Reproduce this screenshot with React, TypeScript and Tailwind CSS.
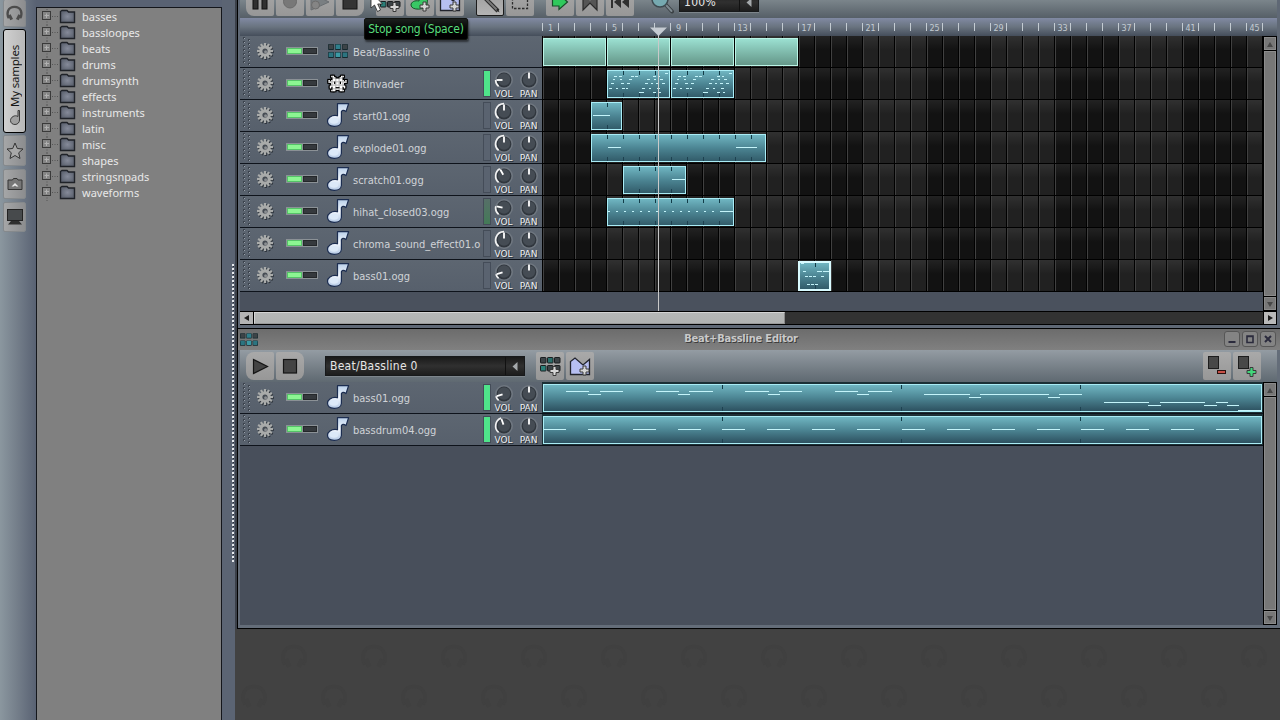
import React from 'react';
import { clsx } from 'clsx';

type Note = [x: number, y: number, w: number];

interface Clip {
  start: number;
  bars: number;
  kind?: 'beat' | 'pattern';
  selected?: boolean;
  notes?: Note[];
}

interface Track {
  name: string;
  icon: 'beat' | 'invader' | 'note';
  vol?: number;
  level?: 'full' | 'low' | 'off';
  clips: Clip[];
}

const ARP: Note[] = [
  [7, 6, 3], [12, 6, 3], [24, 6, 3], [28, 6, 3], [46, 6, 3], [58, 3, 3], [51, 6, 2],
  [6, 9, 2], [13, 9, 2], [22, 9, 3], [40, 9, 3], [47, 9, 2], [53, 9, 3],
  [4, 13, 3], [14, 13, 3], [20, 13, 3], [38, 13, 3], [44, 13, 2], [49, 13, 3], [55, 13, 3],
  [2, 18, 3], [9, 18, 2], [15, 18, 3], [19, 18, 2], [35, 18, 3], [42, 18, 2], [50, 18, 3],
  [32, 22, 5], [46, 22, 3], [52, 22, 2],
];

const HIHAT: Note[] = [
  ...Array.from({ length: 14 }, (_, i): Note => [i * 8 + 1, 13, 2]),
  [113, 13, 13],
];

const SONG: Track[] = [
  {
    name: 'Beat/Bassline 0',
    icon: 'beat',
    clips: [0, 4, 8, 12].map((start) => ({ start, bars: 4, kind: 'beat' })),
  },
  {
    name: 'BitInvader', icon: 'invader', vol: -90, level: 'full',
    clips: [{ start: 4, bars: 4, notes: ARP }, { start: 8, bars: 4, notes: ARP }],
  },
  { name: 'start01.ogg', icon: 'note', vol: 0, clips: [{ start: 3, bars: 2, notes: [[2, 13, 17]] }] },
  {
    name: 'explode01.ogg', icon: 'note', vol: 0,
    clips: [{ start: 3, bars: 11, notes: [[17, 13, 13], [145, 13, 21]] }],
  },
  { name: 'scratch01.ogg', icon: 'note', vol: -30, clips: [{ start: 5, bars: 4, notes: [[49, 13, 13]] }] },
  { name: 'hihat_closed03.ogg', icon: 'note', vol: -78, level: 'low', clips: [{ start: 4, bars: 8, notes: HIHAT }] },
  { name: 'chroma_sound_effect01.o', icon: 'note', vol: 0, clips: [] },
  {
    name: 'bass01.ogg', icon: 'note', vol: -106,
    clips: [{
      start: 16, bars: 2, selected: true,
      notes: [
        [2, 1, 3], [4, 9, 3], [18, 9, 5], [24, 9, 6], [6, 14, 3], [10, 14, 3], [14, 14, 3],
        [22, 14, 3], [8, 22, 3], [12, 22, 3], [16, 22, 3],
      ],
    }],
  },
];

const BASS: Note[] = [
  [23, 7, 23], [45, 10, 13], [57, 7, 23],
  [113, 7, 23], [135, 10, 12], [146, 7, 24],
  [202, 7, 24], [225, 10, 12], [236, 7, 23],
  [292, 7, 23], [314, 10, 12], [325, 7, 24],
  [381, 10, 46], [426, 13, 12], [437, 10, 69], [505, 13, 12], [516, 10, 23],
  [561, 18, 45], [605, 21, 13], [617, 18, 45], [661, 21, 13], [673, 18, 12], [684, 21, 12], [695, 26, 23],
];

const KICK: Note[] = Array.from({ length: 16 }, (_, i): Note => [Math.round(i * 44.87), 13, 23]);

const BEAT_TRACKS = [
  { track: { name: 'bass01.ogg', icon: 'note', vol: -106, level: 'full', clips: [] } as Track, notes: BASS },
  { track: { name: 'bassdrum04.ogg', icon: 'note', vol: -20, level: 'full', clips: [] } as Track, notes: KICK },
];

const FOLDERS = [
  'basses', 'bassloopes', 'beats', 'drums', 'drumsynth', 'effects',
  'instruments', 'latin', 'misc', 'shapes', 'stringsnpads', 'waveforms',
];

const UI_FONT = "font-['DejaVu_Sans_Condensed','DejaVu_Sans',sans-serif]";

/* ---------- icons ---------- */

function BeatIcon({ className }: { className?: string }) {
  const cells = ['#3c4347', '#2f7f8c', '#3c4347', '#2c7480', '#3c9aa5', '#2c7480'];
  return (
    <svg viewBox="0 0 20 14" className={clsx('shrink-0', className)}>
      {cells.map((fill, i) => (
        <g key={i} transform={`translate(${(i % 3) * 7} ${Math.floor(i / 3) * 8})`}>
          <rect width="6" height="6" rx="1" fill="#14282e" />
          <rect x="0.6" y="0.4" width="4.8" height="4.6" rx="0.6" fill={fill} />
        </g>
      ))}
    </svg>
  );
}

function NoteIcon() {
  return (
    <svg viewBox="0 0 24 26" className="h-[26px] w-6 shrink-0">
      <defs>
        <linearGradient id="note" x1="0" y1="0" x2="0" y2="1">
          <stop offset="0" stopColor="#b9cfe9" />
          <stop offset="0.5" stopColor="#f4f9ff" />
          <stop offset="1" stopColor="#b4c8e4" />
        </linearGradient>
      </defs>
      <path
        d="M11.5 1.7H22.6L20 9.6Q17 7.2 15.4 9.5V19.5C15 23 11.5 24.6 8 24.4C4 24.2 1.4 22 1.5 19C1.6 15.6 5.5 13.4 9 13.4C10 13.4 11 13.5 11.5 13.8Z"
        fill="url(#note)"
        stroke="#1c2d50"
        strokeWidth="1.2"
        strokeLinejoin="round"
      />
      <ellipse cx="8" cy="18.7" rx="4.3" ry="3" fill="#dce9f8" />
    </svg>
  );
}

const SPRITE = [
  '..##.....##..',
  '...##...##...',
  '...#######...',
  '#.#########.#',
  '####.###.####',
  '..##.###.##..',
  '..#########..',
  '.###########.',
  '.#.##...##.#.',
  '...#######...',
  '..###...###..',
];

function InvaderIcon() {
  const cells = SPRITE.flatMap((row, y) => [...row].map((c, x) => ({ c, x, y }))).filter((p) => p.c === '#');
  return (
    <svg viewBox="-1 -1 15 13" className="h-[19px] w-[21px] shrink-0">
      <rect x="2.5" y="2" width="8" height="7.5" fill="#000" />
      {cells.map((p) => (
        <rect key={`o${p.x}-${p.y}`} x={p.x - 0.8} y={p.y - 0.8} width="2.6" height="2.6" fill="#000" />
      ))}
      {cells.map((p) => (
        <rect key={`${p.x}-${p.y}`} x={p.x} y={p.y} width="1.05" height="1.05" fill="#fff" />
      ))}
    </svg>
  );
}

function GearIcon() {
  return (
    <svg viewBox="-9 -9 18 18" className="size-[18px] shrink-0">
      <g fill="#2f353d" transform="translate(0.8 1)">
        {Array.from({ length: 12 }, (_, i) => (
          <rect key={i} x="-1.1" y="-8" width="2.2" height="4" transform={`rotate(${i * 30})`} />
        ))}
        <circle r="5.8" />
      </g>
      <g fill="#a9abaa">
        {Array.from({ length: 12 }, (_, i) => (
          <rect key={i} x="-1.1" y="-8" width="2.2" height="4" transform={`rotate(${i * 30})`} />
        ))}
        <circle r="5.8" />
      </g>
      <circle r="2.6" fill="#454b53" />
      <circle cx="0.6" cy="0.7" r="1.5" fill="#8a8e91" />
    </svg>
  );
}

function GripIcon() {
  return (
    <svg viewBox="0 0 9 28" className="h-7 w-[9px] shrink-0">
      {Array.from({ length: 7 }, (_, i) => (
        <g key={i}>
          <rect x={1} y={i * 4} width="2" height="2" fill="#3c434d" />
          <rect x={2} y={i * 4 + 1} width="1" height="1" fill="#98a0aa" />
          <rect x={6} y={i * 4 + 2} width="2" height="2" fill="#3c434d" />
          <rect x={7} y={i * 4 + 3} width="1" height="1" fill="#98a0aa" />
        </g>
      ))}
    </svg>
  );
}

function HeadphonesIcon({ className, color }: { className?: string; color: string }) {
  return (
    <svg viewBox="0 0 20 20" className={clsx('shrink-0', className)} fill="none">
      <path d="M4 15C1 10 3 3 10 3S19 10 16 15" stroke={color} strokeWidth="2.4" />
      <path d="M4.5 11.5l2.5 5M15.5 11.5l-2.5 5" stroke={color} strokeWidth="3.2" />
    </svg>
  );
}

function PlusBadge({ x, y, fill = '#d6d6d6' }: { x: number; y: number; fill?: string }) {
  return (
    <path
      d={`M${x - 1.5} ${y - 4.5}h3v3h3v3h-3v3h-3v-3h-3v-3h3z`}
      fill={fill}
      stroke="#3a3a3a"
      strokeWidth="1"
    />
  );
}

function AddBeatIcon() {
  const cells = ['#3c4347', '#2b6f6c', '#3c4347', '#2b7f78', '#3c4347', '#3c4347'];
  return (
    <svg viewBox="0 0 28 28" className="size-7">
      {cells.map((fill, i) => (
        <rect
          key={i}
          x={4.5 + (i % 3) * 7}
          y={5.5 + Math.floor(i / 3) * 8}
          width="5.5"
          height="5.5"
          rx="0.6"
          fill={fill}
          stroke="#1b1e20"
        />
      ))}
      <PlusBadge x={18.5} y={19} />
    </svg>
  );
}

function AddAutomationIcon() {
  return (
    <svg viewBox="0 0 28 28" className="size-7">
      <path d="M4.5 22.5V9.5L9 6L17 13L23.5 7.5V22.5Z" fill="#b7bff2" stroke="#22242c" strokeWidth="1.3" />
      <PlusBadge x={18.5} y={18.5} />
    </svg>
  );
}

/* ---------- small controls ---------- */

function ToolButton({ children, active, className }: { children?: React.ReactNode; active?: boolean; className?: string }) {
  return (
    <div
      className={clsx(
        'flex size-7 shrink-0 items-center justify-center overflow-hidden rounded-[2px]',
        active
          ? 'border border-[#1c1c1c] bg-linear-to-b from-[#9b9b9b] to-[#b4b4b4]'
          : 'bg-linear-to-b from-[#a9a9a9] to-[#979797]',
        className,
      )}
    >
      {children}
    </div>
  );
}

function Combo({ value, className }: { value: string; className?: string }) {
  return (
    <div
      className={clsx(
        'flex shrink-0 items-center justify-between border border-[#17191b] bg-linear-to-b from-[#1a1a1a] via-[#303030] to-[#1d1d1d] text-[12px] leading-none tracking-[0.27px] text-[#e6e6e6] shadow-[0_1px_0_#7d858b]',
        className,
      )}
    >
      <span className="whitespace-nowrap pl-1">{value}</span>
      <span className="flex h-full w-[19px] items-center justify-center border-l border-[#111]">
        <svg viewBox="0 0 6 9" className="h-[9px] w-1.5">
          <path d="M5.5 0V9L0.5 4.5Z" fill="#a5a9ac" />
        </svg>
      </span>
    </div>
  );
}

function Knob({ label, angle, arc }: { label: string; angle: number; arc?: boolean }) {
  const rad = ((angle - 90) * Math.PI) / 180;
  const from = ((-140 - 90) * Math.PI) / 180;
  const px = Math.cos(rad);
  const py = Math.sin(rad);
  return (
    <div className="flex w-[25px] flex-col items-center">
      <svg viewBox="-10 -10 20 20" className="size-5 shrink-0">
        <circle r="9" fill="#6f7780" />
        <circle r="7.4" fill="#30363d" />
        <circle r="6.2" cy="-0.5" fill="#454c54" />
        {arc && (
          <path
            d={`M${8.4 * Math.cos(from)} ${8.4 * Math.sin(from)}A8.4 8.4 0 0 1 ${8.4 * px} ${8.4 * py}`}
            fill="none"
            stroke="#f2f2f2"
            strokeWidth="1.6"
          />
        )}
        <path d={`M${px * 1.5} ${py * 1.5}L${px * 7.5} ${py * 7.5}`} stroke="#fff" strokeWidth="1.8" />
      </svg>
      <span className="-mt-px font-['DejaVu_Sans',sans-serif] text-[9px] leading-[10px] text-[#eef0f2] [text-shadow:1px_1px_0_#2a2f36]">
        {label}
      </span>
    </div>
  );
}

function Leds() {
  return (
    <div className="flex h-[8px] w-8 shrink-0 border border-[#8b9196] bg-[#8b9196]">
      <div className="h-full w-[15px] border border-[#55c268] bg-[#8cf592]" />
      <div className="ml-px h-full flex-1 border border-[#24272a] bg-[#35393d]" />
    </div>
  );
}

/* ---------- tracks ---------- */

function TrackHeader({ track }: { track: Track }) {
  const hasMixer = track.vol !== undefined;
  return (
    <div className="flex h-8 w-[302px] shrink-0 items-center border-b border-[#0e131b] bg-linear-to-b from-[#5d6671] to-[#57606c] pb-px">
      <div className="flex w-4 pl-0.5">
        <GripIcon />
      </div>
      <div className="flex w-[30px]">
        <GearIcon />
      </div>
      <Leds />
      <div className="flex h-full w-[35px] shrink-0 items-center justify-center pl-1">
        {track.icon === 'beat' && <BeatIcon className="h-3.5 w-5" />}
        {track.icon === 'invader' && <InvaderIcon />}
        {track.icon === 'note' && <NoteIcon />}
      </div>
      <div className="w-[129px] shrink-0 pt-[3px] text-[11px] leading-[15px] whitespace-nowrap text-[#d0d3d7]">
        {track.name}
      </div>
      {hasMixer && (
        <>
          <div
            className={clsx('ml-px h-[27px] w-2 shrink-0 border border-[#444c58]', {
              'border-[#3fa566] bg-[#4fe48a]': track.level === 'full',
              'bg-linear-to-b from-[#566f68] to-[#437a57]': track.level === 'low',
              'bg-[#5a6370]': !track.level,
            })}
          />
          <div className="flex pt-0.5">
            <Knob label="VOL" angle={track.vol ?? 0} arc />
            <Knob label="PAN" angle={0} />
          </div>
        </>
      )}
    </div>
  );
}

function ClipFace({ notes = [], ticks }: { notes?: Note[]; ticks: number[] }) {
  return (
    <svg className="block size-full overflow-hidden" shapeRendering="crispEdges">
      {ticks.map((x) => (
        <g key={x}>
          <rect x={x - 1} y="0" width="1" height="4" fill="#123c48" />
          <rect x={x - 1} y="22" width="1" height="4" fill="#1e4150" />
        </g>
      ))}
      {notes.map(([x, y, w], i) => (
        <rect key={i} x={x - 1} y={y - 1} width={w} height="1" fill="#c4f4fa" />
      ))}
    </svg>
  );
}

function ClipBox({ clip }: { clip: Clip }) {
  const ticks = clip.kind === 'beat' ? [] : Array.from({ length: clip.bars - 1 }, (_, i) => (i + 1) * 16);
  return (
    <div
      className={clsx('absolute', {
        'top-0.5 h-7 border': !clip.selected,
        'top-px -ml-px h-[30px] border-2 border-[#d9fbff]': clip.selected,
        'border-[#baf3e5] bg-linear-to-b from-[#9be0d1] to-[#659789]': clip.kind === 'beat',
        'bg-linear-to-b from-[#70b6c2] via-[#4c8593] to-[#325c6a]': clip.kind !== 'beat',
        'border-[#a9ecf5]': clip.kind !== 'beat' && !clip.selected,
      })}
      style={{ left: clip.start * 16 + 1, width: clip.bars * 16 + (clip.selected ? 1 : -1) }}
    >
      <ClipFace notes={clip.notes} ticks={ticks} />
    </div>
  );
}

function SongLane({ clips }: { clips: Clip[] }) {
  return (
    <div className="relative h-8 w-[721px] border-b border-black bg-[repeating-linear-gradient(90deg,#000_0_1px,#404040_1px_2px,transparent_2px_16px),linear-gradient(180deg,rgba(255,255,255,0.07),rgba(255,255,255,0)_45%),repeating-linear-gradient(90deg,#121212_0_64px,#212121_64px_128px)]">
      {clips.map((clip) => (
        <ClipBox key={clip.start} clip={clip} />
      ))}
    </div>
  );
}

function Timeline() {
  return (
    <div className="flex h-[18px] shrink-0 bg-linear-to-b from-[#818aa3] via-[#69737f] to-[#454e5b] pl-[302px]">
      <div className="flex h-full w-[735px] items-center overflow-hidden">
        {Array.from({ length: 46 }, (_, i) => (
          <div
            key={i}
            className="flex h-2 w-4 shrink-0 items-center justify-center border-l border-[#c4ccd3] pt-1 font-['DejaVu_Sans',sans-serif] text-[8px] leading-none text-[#c3cbd2]"
          >
            {i % 4 === 0 && i < 45 ? i + 1 : ''}
          </div>
        ))}
      </div>
    </div>
  );
}

function Arrow({ dir, dim }: { dir: 'up' | 'down' | 'left' | 'right'; dim?: boolean }) {
  const paths = { up: 'M0 6L3 1L6 6Z', down: 'M0 1L3 6L6 1Z', left: 'M5 0V6L0 3Z', right: 'M1 0V6L6 3Z' };
  return (
    <svg viewBox="0 0 6 6" className="size-1.5">
      <path d={paths[dir]} fill={dim ? '#474747' : '#1d1d1d'} />
    </svg>
  );
}

function VScroll() {
  return (
    <div className="flex w-[14px] shrink-0 flex-col border border-black bg-black">
      <div className="flex h-[13px] items-center justify-center border border-[#8a8a8a] bg-[#777]">
        <Arrow dir="up" dim />
      </div>
      <div className="my-px flex-1 border border-[#8c8c8c] bg-[#777]" />
      <div className="flex h-[13px] items-center justify-center border border-[#8a8a8a] bg-[#777]">
        <Arrow dir="down" dim />
      </div>
    </div>
  );
}

function HScroll() {
  return (
    <div className="flex h-3.5 shrink-0 border-y border-black bg-[#323232]">
      <div className="flex w-[13px] items-center justify-center bg-[#b4b4b4]">
        <Arrow dir="left" />
      </div>
      <div className="w-px bg-black" />
      <div className="w-[531px] border border-[#d3d3d3] border-r-[#888] border-b-[#999] bg-linear-to-b from-[#b5b7b6] to-[#b0b2b1]" />
      <div className="ml-auto flex w-[14px] items-center justify-center border-x border-black bg-[#b9b9b9]">
        <Arrow dir="right" />
      </div>
    </div>
  );
}

/* ---------- windows ---------- */

function SongToolbar() {
  return (
    <div className="flex h-[18px] shrink-0 items-start overflow-hidden bg-linear-to-b from-[#7b858b] to-[#565f67] pl-1.5">
      <div className="-mt-3 flex items-start">
        <ToolButton className="rounded-bl-lg">
          <svg viewBox="0 0 28 28" className="size-7">
            <rect x="7" y="6" width="5" height="15" fill="#303030" stroke="#111" />
            <rect x="16" y="6" width="5" height="15" fill="#303030" stroke="#111" />
          </svg>
        </ToolButton>
        <ToolButton className="ml-0.5">
          <svg viewBox="0 0 28 28" className="size-7">
            <circle cx="14" cy="13.5" r="6.5" fill="#787878" stroke="#6a6a6a" />
          </svg>
        </ToolButton>
        <ToolButton className="ml-0.5">
          <svg viewBox="0 0 28 28" className="size-7">
            <path d="M5 5L23 14L12 19L5 22Z" fill="#7a7f82" stroke="#6a6e72" />
            <circle cx="9.5" cy="17" r="4" fill="#858585" stroke="#6c6c6c" />
          </svg>
        </ToolButton>
        <ToolButton className="ml-0.5 rounded-br-lg">
          <svg viewBox="0 0 28 28" className="size-7">
            <rect x="7" y="7" width="14" height="14" fill="#343434" stroke="#151515" />
          </svg>
        </ToolButton>
        <ToolButton className="ml-3">
          <AddBeatIcon />
        </ToolButton>
        <ToolButton className="ml-0.5">
          <svg viewBox="0 0 28 28" className="size-7">
            <path d="M5 17c0-3 4-5 8-4l1-8h8l-1 12c-1 5-16 6-16 0z" fill="#39c765" stroke="#15552a" />
            <PlusBadge x={18.5} y={18.5} />
          </svg>
        </ToolButton>
        <ToolButton className="ml-0.5">
          <AddAutomationIcon />
        </ToolButton>
        <ToolButton active className="ml-3">
          <svg viewBox="0 0 28 28" className="size-7 shrink-0">
            <path d="M6 7L22 23" stroke="#2a2a2a" strokeWidth="4" />
            <path d="M6 7L22 23" stroke="#7a7a7a" strokeWidth="2" />
            <path d="M20 22l3.5 2.5L22 20.5z" fill="#222" />
          </svg>
        </ToolButton>
        <ToolButton className="ml-0.5">
          <svg viewBox="0 0 28 28" className="size-7">
            <rect x="6.5" y="6.5" width="15" height="14" fill="none" stroke="#2c2c2c" strokeWidth="1.3" strokeDasharray="2.5 1.5" />
          </svg>
        </ToolButton>
        <ToolButton className="ml-3">
          <svg viewBox="0 0 28 28" className="size-7">
            <path d="M6.5 10.5H13V6L21.5 14L13 21.5V18H6.5Z" fill="#2fc95c" stroke="#174d28" strokeWidth="1.2" />
          </svg>
        </ToolButton>
        <ToolButton className="ml-0.5">
          <svg viewBox="0 0 28 28" className="size-7">
            <path d="M7 6H21V22L14 15L7 22Z" fill="#555" stroke="#2a2a2a" strokeWidth="1.2" />
            <path d="M10 6H18L14 13Z" fill="#989898" />
          </svg>
        </ToolButton>
        <ToolButton className="ml-0.5">
          <svg viewBox="0 0 28 28" className="size-7" fill="#2f2f2f">
            <path d="M5 7H7V20H5ZM15 8V20L8 14ZM23 8V20L16 14Z" />
          </svg>
        </ToolButton>
      </div>
      <svg viewBox="0 0 26 14" className="ml-4 h-3.5 w-[26px] shrink-0">
        <path d="M16 5L22 11.5" stroke="#3a4044" strokeWidth="4" strokeLinecap="round" />
        <path d="M16 5L21.5 11" stroke="#7d8990" strokeWidth="2" strokeLinecap="round" />
        <circle cx="10" cy="-1" r="8" fill="#76a9b0" stroke="#3d4a50" strokeWidth="1.5" />
      </svg>
      <Combo value="100%" className="-mt-2 ml-[3px] h-5 w-20" />
    </div>
  );
}

function SongEditor() {
  return (
    <section className="relative ml-0.5 flex h-[328px] flex-col border-l border-black bg-[#5f6875] pl-0.5">
      <div className="flex w-[1037px] flex-col">
        <SongToolbar />
        <Timeline />
        <div className="flex h-[275px] bg-[#4a515d]">
          <div className="flex flex-col">
            {SONG.map((track) => (
              <div key={track.name} className="flex">
                <TrackHeader track={track} />
                <SongLane clips={track.clips} />
              </div>
            ))}
          </div>
          <VScroll />
        </div>
        <HScroll />
      </div>

      {/* playhead */}
      <svg viewBox="0 0 17 284" className="absolute top-[27px] left-[412px] h-[284px] w-[17px]">
        <path d="M8.5 8V284" stroke="#c9c9c9" strokeWidth="1" />
        <path d="M0 0.5H17L8.5 9Z" fill="#c5cbd2" />
      </svg>

      {/* tooltip and pointer */}
      <div className="absolute top-[18px] left-[126px] flex h-[22px] w-[104px] items-center justify-center whitespace-nowrap rounded-[2px] border border-[#10130f] bg-linear-to-b from-[#1c201e] to-black text-[12px] leading-none tracking-[-0.18px] text-[#58dd7c] shadow-[1px_2px_2px_rgba(0,0,0,0.5)]">
        Stop song (Space)
      </div>
      <svg viewBox="0 0 14 20" className="absolute -top-2 left-[132px] h-5 w-3.5">
        <path d="M1 0V16L4.5 13L7.5 19.5L10.5 18L7.7 12H12.5Z" fill="#fff" stroke="#222" strokeWidth="0.8" />
      </svg>
    </section>
  );
}

function WindowButton({ children }: { children: React.ReactNode }) {
  return (
    <div className="flex size-4 items-center justify-center rounded-[3px] border border-[#565656] bg-[#848484]">
      <svg viewBox="0 0 10 10" className="size-2.5" fill="none" stroke="#2b2b3d" strokeWidth="1.6">
        {children}
      </svg>
    </div>
  );
}

function BeatEditor() {
  return (
    <section className="ml-0.5 flex h-[301px] flex-col border-y border-l border-black bg-[#646d79]">
      <div className="flex h-[21px] shrink-0 items-center bg-linear-to-b from-[#6c6c6c] to-[#808080] pr-1 pb-px pl-0.5">
        <BeatIcon className="h-[13px] w-[18px]" />
        <h2 className="flex-1 pb-px text-center text-[11px] leading-none font-bold tracking-[-0.2px] text-[#c9c9c9] [text-shadow:1px_1px_0_#3d3d3d]">
          Beat+Bassline Editor
        </h2>
        <div className="flex gap-0.5">
          <WindowButton><path d="M1.5 8H8.5" strokeWidth="2" /></WindowButton>
          <WindowButton><path d="M2 2H8V8.5H2ZM2 2.5H8" /></WindowButton>
          <WindowButton><path d="M2 2L8 8M8 2L2 8" strokeWidth="2" /></WindowButton>
        </div>
      </div>
      <div className="ml-0.5 flex h-[275px] w-[1037px] flex-col bg-[#484f5b]">
        <div className="flex h-8 shrink-0 items-center bg-linear-to-b from-[#949ca3] to-[#5f6971] pr-4 pl-1.5">
          <ToolButton className="rounded-l-lg">
            <svg viewBox="0 0 28 28" className="size-7">
              <path d="M7.5 7.5L21.5 14.5L7.5 21.5Z" fill="#444" stroke="#151515" strokeWidth="1.2" />
            </svg>
          </ToolButton>
          <ToolButton className="ml-0.5 rounded-r-lg">
            <svg viewBox="0 0 28 28" className="size-7">
              <rect x="7.5" y="7.5" width="13" height="13.5" fill="#444" stroke="#151515" strokeWidth="1.2" />
            </svg>
          </ToolButton>
          <Combo value="Beat/Bassline 0" className="ml-[21px] h-5 w-[200px]" />
          <ToolButton className="ml-[11px]">
            <AddBeatIcon />
          </ToolButton>
          <ToolButton className="ml-0.5">
            <AddAutomationIcon />
          </ToolButton>
          <ToolButton className="ml-auto">
            <svg viewBox="0 0 28 28" className="size-7">
              <rect x="5.5" y="4.5" width="10" height="12" fill="#484848" stroke="#1d1d1d" />
              <rect x="14.5" y="18.5" width="8" height="3" fill="#c95046" stroke="#2a1210" />
            </svg>
          </ToolButton>
          <ToolButton className="ml-0.5">
            <svg viewBox="0 0 28 28" className="size-7">
              <rect x="5.5" y="4.5" width="10" height="12" fill="#484848" stroke="#1d1d1d" />
              <PlusBadge x={18.5} y={20} fill="#41d67a" />
            </svg>
          </ToolButton>
        </div>
        <div className="flex flex-1">
          <div className="flex flex-col">
            {BEAT_TRACKS.map(({ track, notes }) => (
              <div key={track.name} className="flex">
                <TrackHeader track={track} />
                <div className="h-8 w-[721px] border-b border-[#0e131b] bg-[#1c3036] py-0.5 pl-px">
                  <div className="h-7 w-[719px] border border-[#a9ecf5] bg-linear-to-b from-[#70b6c2] via-[#4c8593] to-[#2d5160]">
                    <ClipFace notes={notes} ticks={[179, 358, 537]} />
                  </div>
                </div>
              </div>
            ))}
          </div>
          <VScroll />
        </div>
      </div>
    </section>
  );
}

function Workspace() {
  return (
    <div className="flex-1 overflow-hidden bg-[#424242]">
      {[0, 1].map((row) => (
        <div key={row} className={clsx('flex h-10 items-center gap-[50px]', row === 0 ? 'mt-2 pl-[44px]' : 'pl-1')}>
          {Array.from({ length: 14 }, (_, i) => (
            <HeadphonesIcon key={i} className="size-[30px]" color="#404040" />
          ))}
        </div>
      ))}
    </div>
  );
}

/* ---------- side bar ---------- */

function SideTab({ children, className }: { children: React.ReactNode; className?: string }) {
  return (
    <div
      className={clsx(
        'flex w-[23px] items-center justify-center rounded-[2px] border border-[#85898c] bg-linear-to-r from-[#a5a6a7] to-[#8c8d8f]',
        className,
      )}
    >
      {children}
    </div>
  );
}

function SideTabs() {
  return (
    <div className="flex w-9 shrink-0 flex-col bg-linear-to-r from-[#8b979f] via-[#737d89] to-[#596273] pl-[3px]">
      <SideTab className="h-[27px] border-t-0">
        <HeadphonesIcon className="size-[19px]" color="#4c4c4c" />
      </SideTab>
      <div className="mt-0.5 flex h-[104px] w-[23px] flex-col items-center justify-end rounded-[3px] border border-black bg-linear-to-r from-[#d0d0d0] to-[#b8b8b8] pb-1.5">
        <span className="rotate-180 font-['Noto_Sans',sans-serif] text-[11.5px] leading-[19px] tracking-[-0.2px] whitespace-nowrap text-[#161616] [writing-mode:vertical-rl]">
          My samples
        </span>
        <svg viewBox="0 0 12 17" className="mt-0.5 h-[17px] w-3">
          <path d="M10.5 1.5H9V7.5C6 5.5 1.5 8 1.5 11.5C1.5 14 3.5 15.5 6 15.5C9 15.5 10.5 13 10.5 11Z" fill="#a0a0a0" stroke="#3b3b3b" />
        </svg>
      </div>
      <SideTab className="mt-0.5 h-[31px]">
        <svg viewBox="0 0 18 18" className="size-[18px]">
          <path d="M9 1L11.3 6.5L17 7L12.7 10.8L14 16.5L9 13.5L4 16.5L5.3 10.8L1 7L6.7 6.5Z" fill="#a8a8a8" stroke="#343434" />
        </svg>
      </SideTab>
      <SideTab className="mt-[3px] h-[30px]">
        <svg viewBox="0 0 16 14" className="h-3.5 w-4">
          <path d="M1 12.5V3H5.5L6.5 1.5H10L11 3H15V12.5Z" fill="#777" stroke="#343434" />
          <path d="M4.5 9.5L8 6L11.5 9.5H9.5L8 8.5L6.5 9.5Z" fill="#e8e8e8" />
        </svg>
      </SideTab>
      <SideTab className="mt-[3px] h-[30px]">
        <svg viewBox="0 0 16 16" className="size-4">
          <rect x="0.5" y="0.5" width="15" height="11" fill="#474a4c" stroke="#222" />
          <path d="M4 12H12L15 15.5H1Z" fill="#2f2f2f" />
        </svg>
      </SideTab>
    </div>
  );
}

function FolderTree() {
  return (
    <div className="flex w-[186px] shrink-0 flex-col bg-[#596273] pt-[7px]">
      <ul className="flex-1 border-x border-t border-[#14161b] bg-[#808080] pt-px">
        {FOLDERS.map((name) => (
          <li key={name} className="flex h-4 items-center pl-[5px]">
            <svg viewBox="0 0 34 16" className="h-4 w-[34px] shrink-0">
              <defs>
                <radialGradient id="folder">
                  <stop offset="0" stopColor="#858a99" />
                  <stop offset="1" stopColor="#5f6572" />
                </radialGradient>
              </defs>
              <path d="M5 0V16M10 7.5H17" stroke="#555" strokeDasharray="1 1.5" fill="none" />
              <rect x="0.5" y="2.5" width="8" height="8" fill="#858585" stroke="#3a3a3a" />
              <path d="M2.5 6.5H7M4.5 4.5V9" stroke="#b0b0b0" />
              <path d="M18.5 13.5V2.5L20 1.5H25L26.5 3H32.5V13.5Z" fill="url(#folder)" stroke="#1f2228" strokeWidth="1.4" />
            </svg>
            <span className="pl-[6px] font-['Noto_Sans',sans-serif] text-[11px] leading-4 text-[#e8e8e8]">{name}</span>
          </li>
        ))}
      </ul>
    </div>
  );
}

function Splitter() {
  return (
    <div className="flex w-[13px] shrink-0 items-start justify-end bg-[#5b6473] pt-[264px]">
      <svg viewBox="0 0 3 298" className="h-[298px] w-[3px]" shapeRendering="crispEdges">
        {Array.from({ length: 75 }, (_, i) => (
          <g key={i}>
            <rect x="1" y={i * 4 + 1} width="1" height="2" fill="#262c36" />
            <rect x="0" y={i * 4} width="2" height="2" fill="#e6e9ed" />
          </g>
        ))}
      </svg>
    </div>
  );
}

export default function App() {
  return (
    <div className={clsx('flex h-[720px] w-[1280px] overflow-hidden bg-[#596273]', UI_FONT)}>
      <SideTabs />
      <FolderTree />
      <Splitter />
      <main className="flex min-w-0 flex-1 flex-col overflow-hidden bg-[#3b4049]">
        <SongEditor />
        <BeatEditor />
        <Workspace />
      </main>
    </div>
  );
}
